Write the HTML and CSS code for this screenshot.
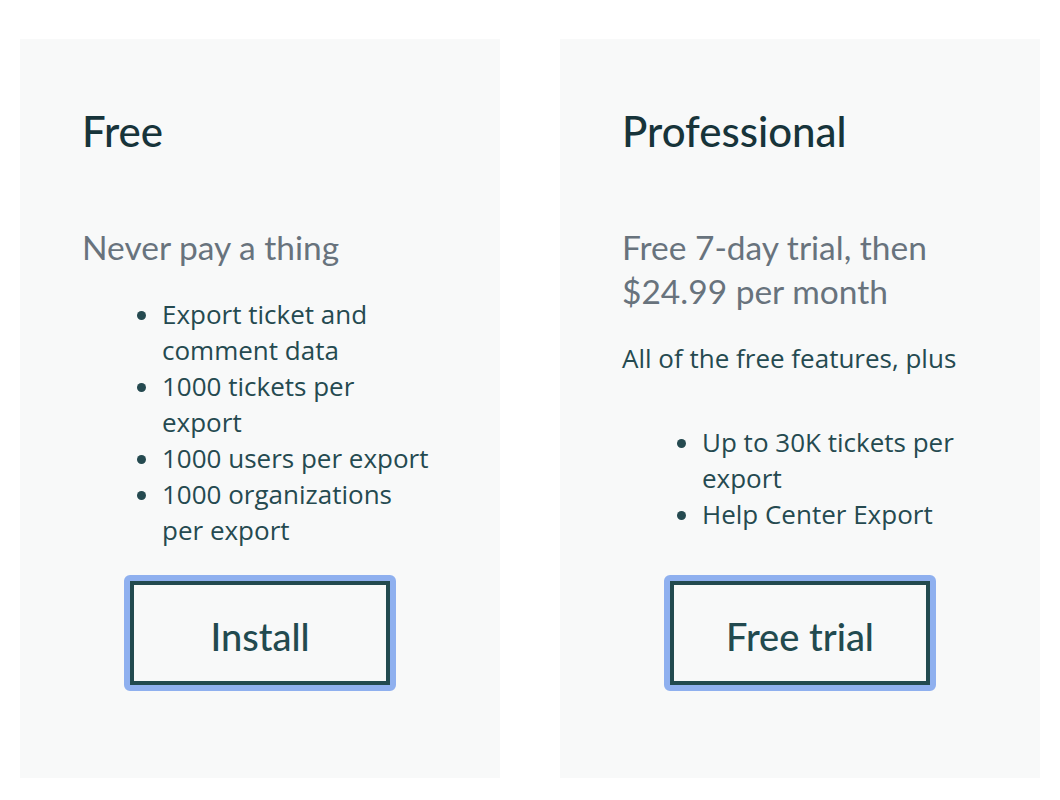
FILE: index.html
```html
<!DOCTYPE html>
<html lang="en">
<head>
    <meta charset="UTF-8">
    <meta name="viewport" content="width=device-width, initial-scale=1.0">
    <title>Plans</title>
    <link rel="stylesheet" href="styles.css">
</head>
<body>
    <div class="plans">
        <div class="card">
            <h2 class="plan-name">Free</h2>
            <p class="price">Never pay a thing</p>
            <ul class="features">
                <li>Export ticket and comment data</li>
                <li>1000 tickets per export</li>
                <li>1000 users per export</li>
                <li>1000 organizations per export</li>
            </ul>
            <button type="button" class="plan-btn">Install</button>
        </div>

        <div class="card">
            <h2 class="plan-name">Professional</h2>
            <p class="price">Free 7-day trial, then $24.99 per month</p>
            <p class="note">All of the free features, plus</p>
            <ul class="features">
                <li>Up to 30K tickets per export</li>
                <li>Help Center Export</li>
            </ul>
            <button type="button" class="plan-btn">Free trial</button>
        </div>
    </div>
</body>
</html>
```

FILE: styles.css
```css
body {
    margin: 0;
    background-color: #fff;
    font-family: 'Lato', 'Open Sans', sans-serif;
    color: #17343a;
}

.plans {
    display: grid;
    grid-template-columns: 480px 480px;
    gap: 60px;
    padding: 39px 20px 22px;
}

.card {
    display: flex;
    flex-direction: column;
    background-color: #f8f9f9;
    padding: 67px 62px 87px;
}

.plan-name {
    margin: 0;
    font-size: 42px;
    line-height: 50px;
    font-weight: 500;
    color: #17343a;
}

.price {
    margin: 69px 0 0;
    font-size: 33.5px;
    line-height: 44px;
    color: #68737d;
}

.note {
    margin: 27px 0 21px;
    font-family: 'Open Sans', sans-serif;
    font-size: 26px;
    line-height: 36px;
    color: #254a50;
}

.features {
    margin: 27px 0 27px;
    padding-left: 80px;
    font-family: 'Open Sans', sans-serif;
    font-size: 26px;
    line-height: 36px;
    color: #254a50;
}

/* blue focus ring outside, square dark border inside */
.plan-btn {
    margin-top: auto;
    align-self: center;
    width: 272px;
    height: 116px;
    padding: 6px 0 0;
    background-color: transparent;
    border: 6px solid #8fb0ef;
    border-radius: 6px;
    box-shadow: inset 0 0 0 4px #224a4f;
    font-family: 'Lato', 'Open Sans', sans-serif;
    font-size: 38px;
    font-weight: 500;
    color: #224a4f;
    cursor: pointer;
}
```
